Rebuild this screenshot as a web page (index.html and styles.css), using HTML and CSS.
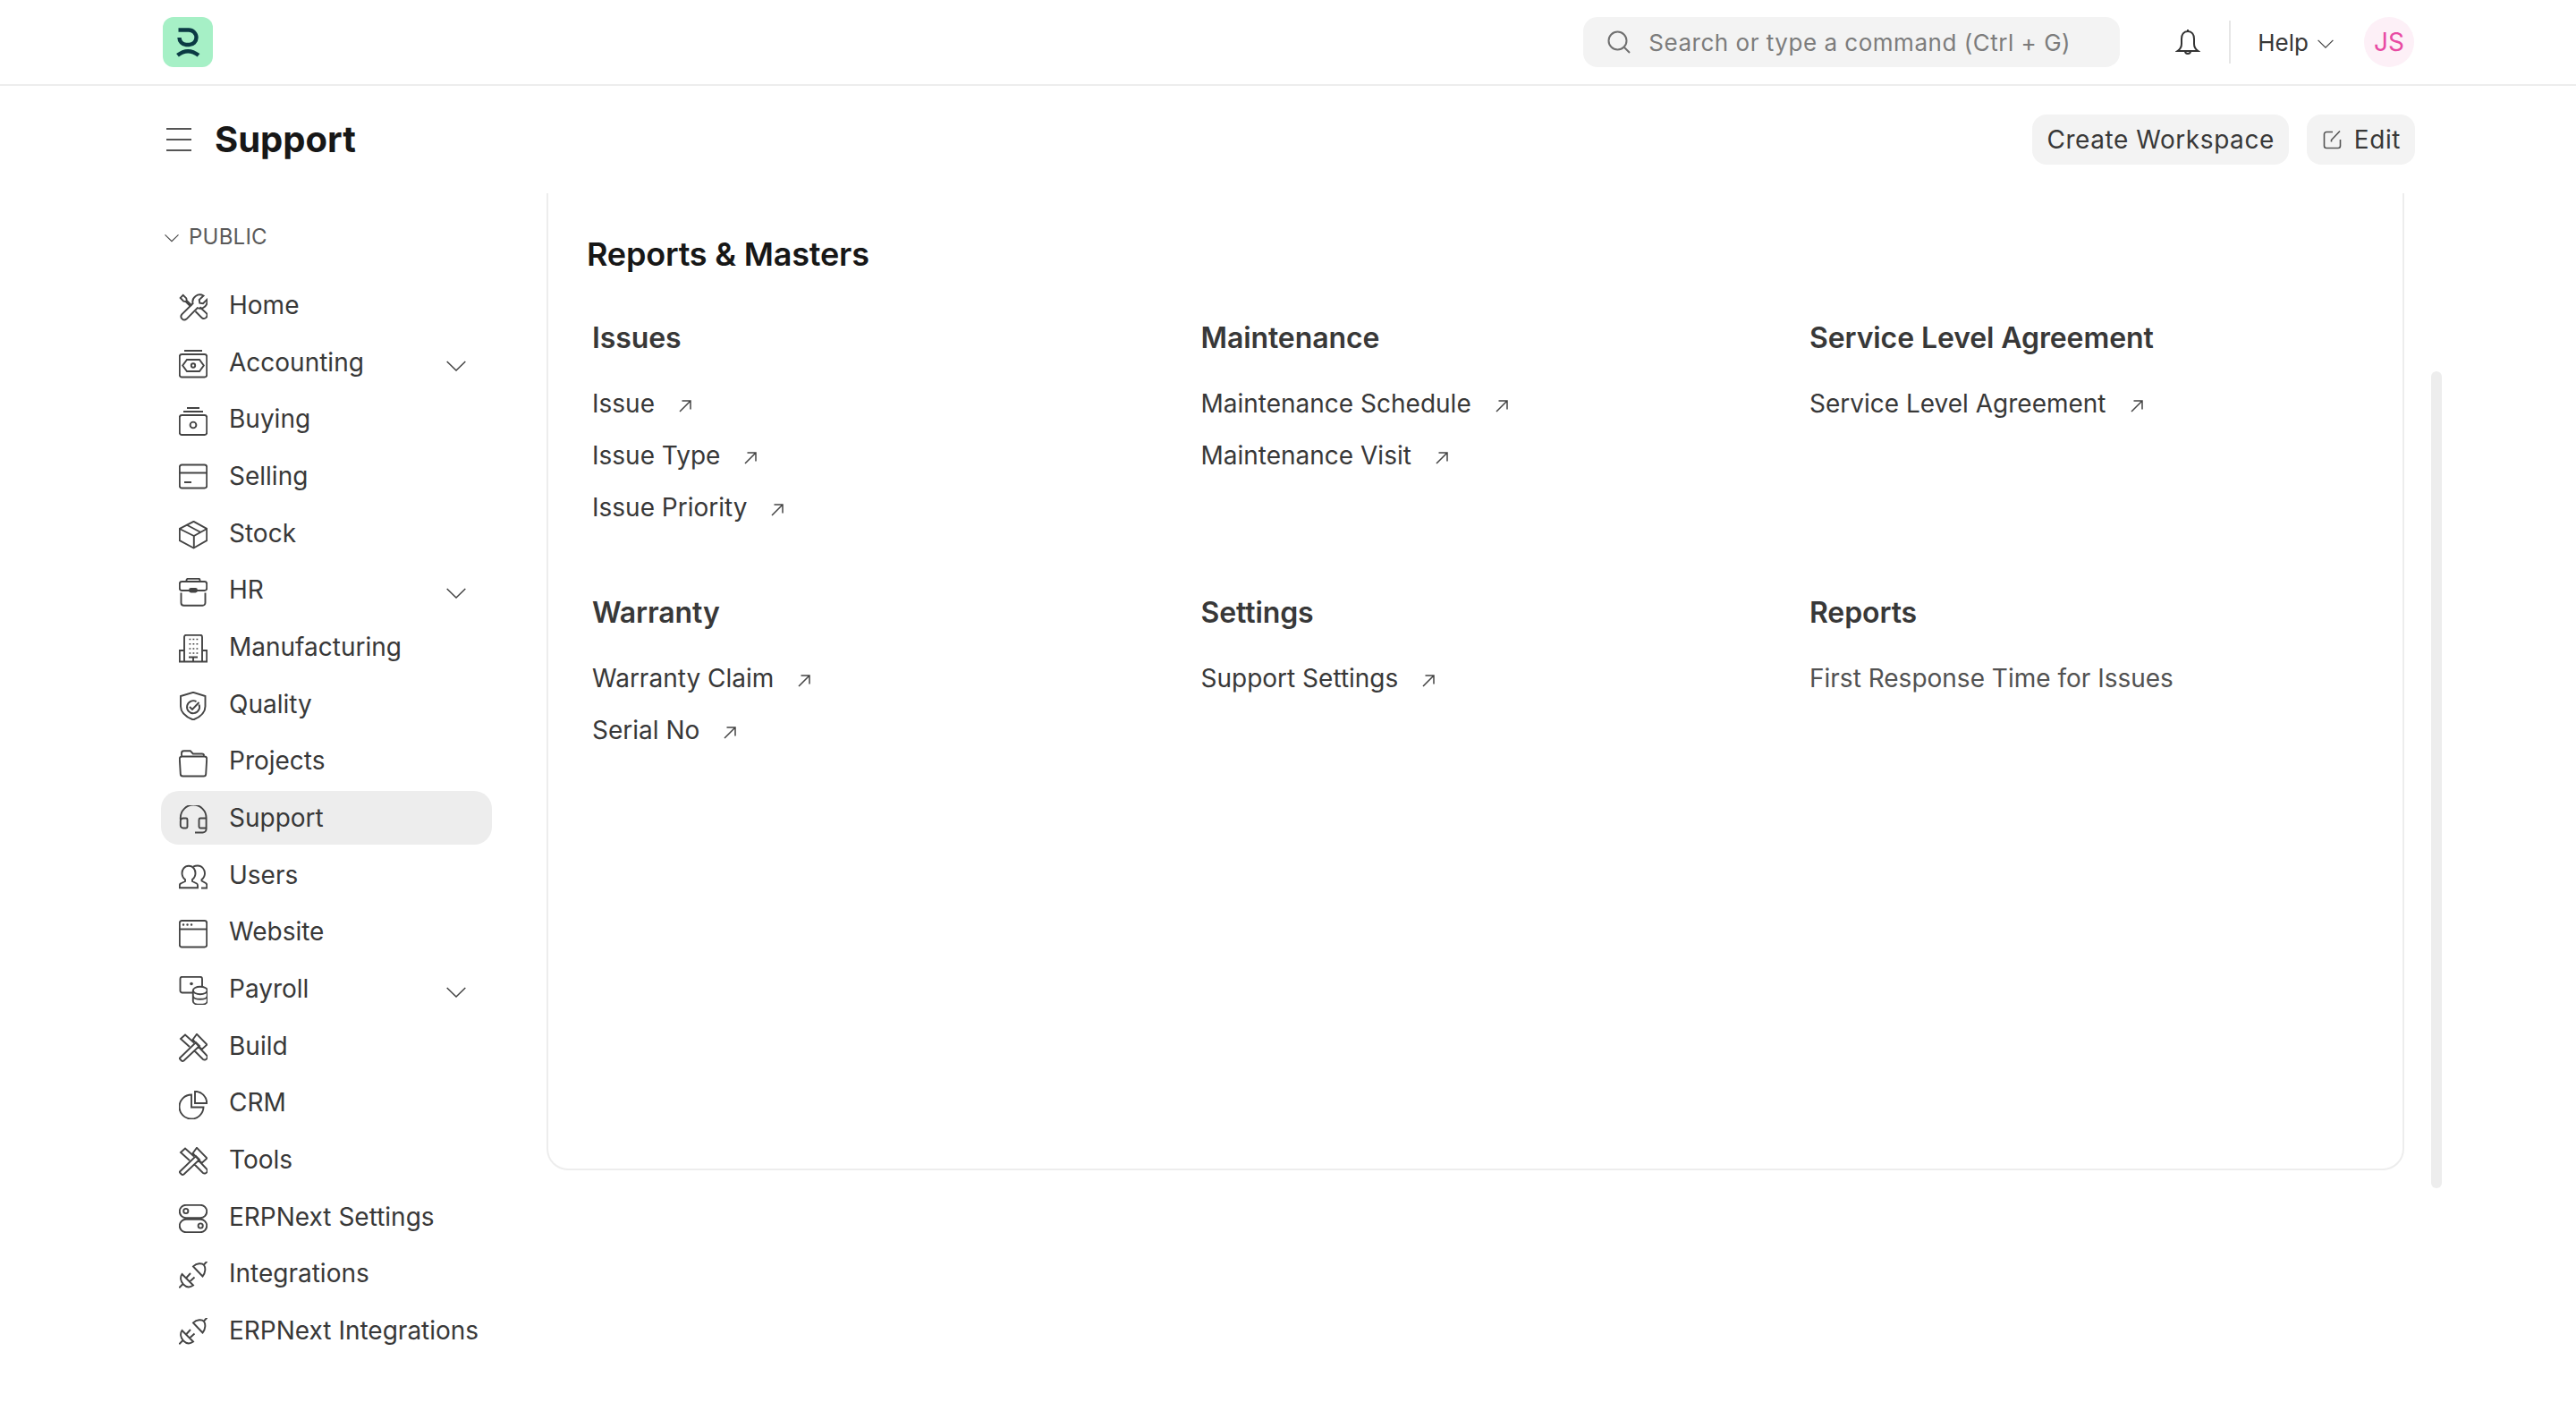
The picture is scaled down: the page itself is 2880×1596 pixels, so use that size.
FILE: index.html
```html
<!DOCTYPE html>
<html lang="en">
<head>
<meta charset="utf-8">
<title>Support</title>
<link rel="stylesheet" href="styles.css">
</head>
<body>
<svg class="defs" width="0" height="0" aria-hidden="true">
  <symbol id="i-arrow" viewBox="0 0 14 14"><path class="thin" d="M1 13 13 1M3.500 1H13v9.500"/></symbol>
  <symbol id="i-chev" viewBox="0 0 22 12"><path class="thin" d="M.7 1 11 11 21.300 1"/></symbol>
  <symbol id="i-tools" viewBox="0 0 32 32"><path d="M27.500 2.500 22.700 7l.6 3.600 3.700.6 4.400-4.400a8 8 0 0 1-10.600 9.400L8.500 28.600a3.700 3.700 0 0 1-5.200-5.200L15.600 11.200A8 8 0 0 1 27.500 2.500Z"/><path d="M13.200 14.500 7.600 9 5.200 8.600 1.700 4.900 4.700 1.900l3.600 3.500.4 2.400 5.700 5.700M18.500 20l7.400 7.400a3.700 3.700 0 0 0 5.100-5.100L23.500 15.300"/></symbol>
  <symbol id="i-acc" viewBox="0 0 32 32"><path d="M6 1h20M3 5h26"/><rect x=".8" y="5" width="30.400" height="25.500" rx="2.500"/><path d="M9 11h14l4.800 6.500L23 24H9l-4.800-6.500Z"/><circle cx="16" cy="17.500" r="2.200"/></symbol>
  <symbol id="i-buy" viewBox="0 0 32 32"><path d="M9 1h14M5 5h22"/><rect x=".8" y="9" width="30.400" height="22" rx="2.500"/><circle cx="16" cy="20" r="3.400"/></symbol>
  <symbol id="i-sell" viewBox="0 0 32 32"><rect x=".8" y="1.500" width="30.400" height="26" rx="2.500"/><path d="M.8 10.500h30.400M6 21h8"/></symbol>
  <symbol id="i-stock" viewBox="0 0 32 32"><path d="M16.500.8 31.200 9v13l-14.700 8.500L.8 22V9Z"/><path d="M.8 9l16 8 14.400-8M16.800 17v13.500M8.500 4.500l16 8.500"/></symbol>
  <symbol id="i-hr" viewBox="0 0 32 32"><path d="M8.500 4V2.500A1.700 1.700 0 0 1 10.200.8h11.600a1.700 1.700 0 0 1 1.700 1.700V4"/><rect x=".8" y="4" width="30.400" height="10" rx="2.500"/><rect x="12" y="12" width="8" height="3.600" rx="1.500"/><path d="M2.500 16.500v11.300a3 3 0 0 0 3 3h21a3 3 0 0 0 3-3V16.500"/></symbol>
  <symbol id="i-mfg" viewBox="0 0 32 32"><path d="M6 30.500V3a2.300 2.300 0 0 1 2.300-2.300h15.400A2.300 2.300 0 0 1 26 3v27.500M6 18H.8v12.500h30.400V18H26M11 25.500h10M16 25.500v5"/><path class="dash" d="M11.500 5.500h1.800M15.500 5.500h1.800M19.500 5.500h1.800M11.500 10.800h1.800M15.500 10.800h1.800M19.500 10.800h1.800M11.500 16h1.800M15.500 16h1.800M19.500 16h1.800M11.500 21h1.800M15.500 21h1.800M19.500 21h1.800"/></symbol>
  <symbol id="i-qual" viewBox="0 0 32 32"><path d="M16 .8 29.500 5v11.500c0 7-6 12-13.500 15C8.500 28.500 2 23.500 2 16.500V5Z"/><path d="M22.500 14.500a7 7 0 1 1-3-3.400M12 17l3 3 7.500-8"/></symbol>
  <symbol id="i-proj" viewBox="0 0 32 32"><path d="M3 7.500V4.700A2.500 2.500 0 0 1 5.500 2.200h7.300l3 3.300h10a2.500 2.500 0 0 1 2.400 2.200M.8 11a2.500 2.500 0 0 1 2.500-2.500h25.400a2.500 2.500 0 0 1 2.500 2.500l-1 17.200a2.500 2.500 0 0 1-2.500 2.300H4.300a2.500 2.500 0 0 1-2.500-2.300Z"/></symbol>
  <symbol id="i-sup" viewBox="0 0 32 32"><path d="M1.800 16v-2a14.400 14.400 0 0 1 28.800 0v12.500a4 4 0 0 1-4 4H18"/><path d="M4.800 14.500H8a1.500 1.500 0 0 1 1.500 1.500v8A1.500 1.500 0 0 1 8 25.500H4.800a3 3 0 0 1-3-3V17.500a3 3 0 0 1 3-3ZM30.600 14.500H24a1.500 1.500 0 0 0-1.500 1.500v8a1.500 1.500 0 0 0 1.500 1.500h6.600"/></symbol>
  <symbol id="i-users" viewBox="0 0 32 32"><g transform="translate(0 3)"><path d="M11 .8C6 .8 3.500 5 3.500 9c0 3 1.500 5.500 3.500 7v2l-5 2.500Q.8 21 .8 23v2.300H21V23q0-2-1-2.500L15 18v-2c2-1.500 3.500-4 3.500-7 0-4-2.500-8.200-7.500-8.200Z"/><path d="M16 1.600Q18.500.5 21 .5c5 0 8 4.500 8 8.500 0 3-1.500 5.500-3.500 7v1.500l4.500 2.500q1.300.8 1.300 2.500v3H25"/></g></symbol>
  <symbol id="i-web" viewBox="0 0 32 32"><rect x=".8" y="1" width="30.400" height="29.500" rx="2.500"/><path d="M.8 10.500h30.400"/><path class="dot" d="M5 5.500h.1M9.500 5.500h.1M14 5.500h.1"/></symbol>
  <symbol id="i-pay" viewBox="0 0 32 32"><path d="M15 18.500H3.500A2.200 2.200 0 0 1 1.500 16V3A2.200 2.200 0 0 1 3.700.8h20.100A2.200 2.200 0 0 1 26 3v8"/><circle class="fill" cx="14" cy="8.500" r="1.800"/><ellipse cx="23.800" cy="16" rx="8" ry="4.200"/><path d="M15.800 16v12c0 2.300 3.600 3.800 8 3.800s8-1.500 8-3.800V16M15.800 22c0 2.300 3.600 3.800 8 3.800s8-1.500 8-3.800"/></symbol>
  <symbol id="i-build" viewBox="0 0 32 32"><path d="M1 27.500 19 10l4 4L5.500 30.500q-1.500 1-2.500 0L1.500 29q-1-1-.5-1.500ZM15.500 7 20 .8l11.500 11.700-6 5.500ZM12 15 2 6 7 1.500l10 9M17 19l10 10a3 3 0 0 0 3.500-5L22 15"/></symbol>
  <symbol id="i-crm" viewBox="0 0 32 32"><path d="M14 4.500a13.500 13.500 0 1 0 13.500 14H14Z"/><path d="M18 14V.8A13.200 13.200 0 0 1 31.200 14Z"/></symbol>
  <symbol id="i-set" viewBox="0 0 32 32"><rect x=".8" y=".8" width="30.400" height="14.400" rx="7.200"/><rect x=".8" y="16.800" width="30.400" height="14.400" rx="7.200"/><circle cx="7.800" cy="7.500" r="2.600"/><circle cx="24.200" cy="24" r="2.600"/></symbol>
  <symbol id="i-plug" viewBox="0 0 32 32"><g transform="translate(0 -1.500)"><path d="M.3 30.800 5 26M3.500 15.500 16 28c-4 3-8 2-11-1s-4-8-1.500-11.500ZM8 20l5-5.500M12 24l5.500-5M16 7c4-4 10-4 12-1.500s2 8.500-1.500 12.500ZM27.500 5.500 31.700.8"/></g></symbol>
</svg>

<header class="navbar">
  <svg class="logo" viewBox="0 0 56 56" aria-hidden="true">
    <rect width="56" height="56" rx="12" fill="#a6f0c6"/>
    <path d="M17.500 14.500H29a8.500 8.500 0 0 1 8.500 8.500 8 8 0 0 1-8 8h-3.500a8 8 0 0 1-7.500-8" fill="none" stroke="#0b3a44" stroke-width="4.400"/>
    <path d="M16.500 42.800Q28 33.500 40 42.800" fill="none" stroke="#0b3a44" stroke-width="4.400"/>
  </svg>
  <div class="nav-right">
    <div class="search">
      <svg class="search-icon" viewBox="0 0 26 26" aria-hidden="true"><circle cx="11.500" cy="11.500" r="10"/><path d="m19 19 6 6"/></svg>
      <span>Search or type a command (Ctrl + G)</span>
    </div>
    <svg class="bell" viewBox="0 0 28 32" aria-hidden="true"><path d="M14 3C9.500 3 7 6.500 7 11.500V17c0 3-1.500 6-4.500 8h23c-3-2-4.500-5-4.500-8v-5.500C21 6.500 18.500 3 14 3ZM14 1v2M11 25a3 3 0 0 0 6 0"/></svg>
    <span class="divider"></span>
    <div class="help">Help <svg class="help-chev" aria-hidden="true"><use href="#i-chev"/></svg></div>
    <div class="avatar">JS</div>
  </div>
</header>

<section class="page-head">
  <div class="title-wrap">
    <svg class="menu" viewBox="0 0 28 26" aria-hidden="true"><path d="M0 1h28M0 13h28M0 25h28"/></svg>
    <h1>Support</h1>
  </div>
  <div class="actions">
    <button class="btn">Create Workspace</button>
    <button class="btn btn-edit">
      <svg class="edit-icon" viewBox="0 0 22 22" aria-hidden="true"><path d="M11 2.500H4a2.500 2.500 0 0 0-2.500 2.500v13A2.500 2.500 0 0 0 4 20.500h13a2.500 2.500 0 0 0 2.500-2.500v-7M19 1.500 9.500 11.500v2"/></svg>
      Edit
    </button>
  </div>
</section>

<main class="layout">
  <nav class="sidebar">
    <div class="group-label"><svg class="group-chev" aria-hidden="true"><use href="#i-chev"/></svg>PUBLIC</div>
    <ul class="items">
      <li class="item"><svg class="icon"><use href="#i-tools"/></svg><span>Home</span></li>
      <li class="item"><svg class="icon"><use href="#i-acc"/></svg><span>Accounting</span><svg class="chev"><use href="#i-chev"/></svg></li>
      <li class="item"><svg class="icon"><use href="#i-buy"/></svg><span>Buying</span></li>
      <li class="item"><svg class="icon"><use href="#i-sell"/></svg><span>Selling</span></li>
      <li class="item"><svg class="icon"><use href="#i-stock"/></svg><span>Stock</span></li>
      <li class="item"><svg class="icon"><use href="#i-hr"/></svg><span>HR</span><svg class="chev"><use href="#i-chev"/></svg></li>
      <li class="item"><svg class="icon"><use href="#i-mfg"/></svg><span>Manufacturing</span></li>
      <li class="item"><svg class="icon"><use href="#i-qual"/></svg><span>Quality</span></li>
      <li class="item"><svg class="icon"><use href="#i-proj"/></svg><span>Projects</span></li>
      <li class="item active"><svg class="icon"><use href="#i-sup"/></svg><span>Support</span></li>
      <li class="item"><svg class="icon"><use href="#i-users"/></svg><span>Users</span></li>
      <li class="item"><svg class="icon"><use href="#i-web"/></svg><span>Website</span></li>
      <li class="item"><svg class="icon"><use href="#i-pay"/></svg><span>Payroll</span><svg class="chev"><use href="#i-chev"/></svg></li>
      <li class="item"><svg class="icon"><use href="#i-build"/></svg><span>Build</span></li>
      <li class="item"><svg class="icon"><use href="#i-crm"/></svg><span>CRM</span></li>
      <li class="item"><svg class="icon"><use href="#i-build"/></svg><span>Tools</span></li>
      <li class="item"><svg class="icon"><use href="#i-set"/></svg><span>ERPNext Settings</span></li>
      <li class="item"><svg class="icon"><use href="#i-plug"/></svg><span>Integrations</span></li>
      <li class="item"><svg class="icon"><use href="#i-plug"/></svg><span>ERPNext Integrations</span></li>
    </ul>
  </nav>

  <article class="card">
    <h2>Reports &amp; Masters</h2>
    <div class="grid">
      <section>
        <h3>Issues</h3>
        <a class="link">Issue<svg class="arrow"><use href="#i-arrow"/></svg></a>
        <a class="link">Issue Type<svg class="arrow"><use href="#i-arrow"/></svg></a>
        <a class="link">Issue Priority<svg class="arrow"><use href="#i-arrow"/></svg></a>
      </section>
      <section>
        <h3>Maintenance</h3>
        <a class="link">Maintenance Schedule<svg class="arrow"><use href="#i-arrow"/></svg></a>
        <a class="link">Maintenance Visit<svg class="arrow"><use href="#i-arrow"/></svg></a>
      </section>
      <section>
        <h3>Service Level Agreement</h3>
        <a class="link">Service Level Agreement<svg class="arrow"><use href="#i-arrow"/></svg></a>
      </section>
      <section>
        <h3>Warranty</h3>
        <a class="link">Warranty Claim<svg class="arrow"><use href="#i-arrow"/></svg></a>
        <a class="link">Serial No<svg class="arrow"><use href="#i-arrow"/></svg></a>
      </section>
      <section>
        <h3>Settings</h3>
        <a class="link">Support Settings<svg class="arrow"><use href="#i-arrow"/></svg></a>
      </section>
      <section>
        <h3>Reports</h3>
        <a class="link muted">First Response Time for Issues</a>
      </section>
    </div>
  </article>

  <div class="scrollbar"></div>
</main>
</body>
</html>
```

FILE: styles.css
```css
* { box-sizing: border-box; }

html, body {
  margin: 0;
  height: 100%;
  background: #fff;
  overflow: hidden;
}

body {
  font-family: Inter, "Liberation Sans", sans-serif;
  font-size: 28px;
  color: #383838;
}

.defs { position: absolute; }

symbol path, symbol rect, symbol circle, symbol ellipse {
  fill: none;
  stroke: #444;
  stroke-width: 1.900;
}

symbol .fill { fill: #444; stroke: none; }
symbol .dot { stroke-linecap: round; stroke-width: 2.400; }
symbol .dash { stroke-width: 1.600; }
symbol .thin { stroke-width: 1.500; }

/* navbar */
.navbar {
  height: 96px;
  border-bottom: 2px solid #ededed;
  padding: 0 181px 0 182px;
  display: flex;
  align-items: center;
  justify-content: space-between;
}

.logo { width: 56px; height: 56px; display: block; }

.nav-right { display: flex; align-items: center; }

.search {
  width: 600px;
  height: 56px;
  background: #f3f3f3;
  border-radius: 16px;
  padding-left: 27px;
  display: flex;
  align-items: center;
  gap: 20px;
  font-size: 26px;
  letter-spacing: 0.02em;
  color: #7c7c7c;
}

.search-icon { width: 26px; height: 26px; fill: none; stroke: #6f6f6f; stroke-width: 2; }

.bell {
  width: 28px;
  height: 32px;
  margin: 2px 0 0 62px;
  fill: none;
  stroke: #333;
  stroke-width: 2;
}

.divider {
  width: 2px;
  height: 48px;
  background: #e6e6e6;
  margin-left: 32px;
}

.help {
  margin-left: 30px;
  display: flex;
  align-items: center;
  gap: 10px;
  font-size: 26px;
  color: #383838;
}

.help-chev { width: 18px; height: 10px; margin-top: 4px; }

.avatar {
  width: 56px;
  height: 56px;
  border-radius: 50%;
  margin-left: 34px;
  background: #fdf0f7;
  color: #e84aa3;
  display: flex;
  align-items: center;
  justify-content: center;
}

/* page head */
.page-head {
  height: 120px;
  padding: 0 180px 0 186px;
  display: flex;
  align-items: center;
  justify-content: space-between;
}

.title-wrap { display: flex; align-items: center; gap: 26px; }

.menu { width: 28px; height: 26px; fill: none; stroke: #555; stroke-width: 2; }

h1 {
  margin: 0;
  font-size: 40px;
  line-height: 48px;
  font-weight: 700;
  color: #171717;
}

.actions { display: flex; gap: 20px; }

.btn {
  height: 56px;
  padding: 0 16px;
  border: 0;
  border-radius: 16px;
  background: #f3f3f3;
  font: inherit;
  letter-spacing: 0.02em;
  color: #383838;
  display: flex;
  align-items: center;
  gap: 13px;
}

.btn-edit { padding-left: 18px; }

.edit-icon { width: 22px; height: 22px; fill: none; stroke: #555; stroke-width: 1.600; }

/* layout */
.layout {
  display: flex;
  align-items: flex-start;
  padding-left: 180px;
}

.sidebar { width: 370px; margin-right: 61px; padding-top: 30px; }

.group-label {
  height: 36px;
  display: flex;
  align-items: center;
  font-size: 24px;
  letter-spacing: 0.01em;
  color: #5a5a5a;
}

.group-chev { width: 16px; height: 10px; margin: 4px 11px 0 4px; }

.items {
  list-style: none;
  margin: 29px 0 0;
  padding: 0;
  display: flex;
  flex-direction: column;
  gap: 3.670px;
}

.item {
  height: 60px;
  padding: 0 29px 0 20px;
  border-radius: 20px;
  display: flex;
  align-items: center;
  gap: 24px;
  white-space: nowrap;
}

.item.active { background: #ededed; }

.item span { flex: 1; }

.icon { width: 32px; height: 32px; flex: none; overflow: visible; margin-top: 5px; }

.chev { width: 22px; height: 12px; flex: none; margin-top: 8px; }

/* card */
.card {
  width: 2077px;
  height: 1092px;
  padding: 46px 0 0 43px;
  border: 2px solid #ededed;
  border-top: 0;
  border-radius: 0 0 24px 24px;
}

h2 {
  margin: 0 0 50px;
  font-size: 36px;
  line-height: 44px;
  font-weight: 600;
  letter-spacing: -0.2px;
  color: #171717;
}

.grid {
  display: grid;
  grid-template-columns: repeat(3, 680.500px);
  row-gap: 67px;
  margin-left: 6px;
}

h3 {
  margin: 0 0 22px;
  font-size: 32px;
  line-height: 44px;
  font-weight: 600;
  letter-spacing: -0.1px;
  color: #383838;
}

.link {
  height: 58px;
  display: flex;
  align-items: center;
  gap: 27px;
  color: #383838;
}

.link.muted { color: #525252; }

.arrow { width: 14px; height: 14px; flex: none; margin-top: 5px; }

.scrollbar {
  width: 12px;
  height: 913px;
  margin: 199px 0 0 30px;
  background: #ededed;
  border-radius: 6px;
}
```
